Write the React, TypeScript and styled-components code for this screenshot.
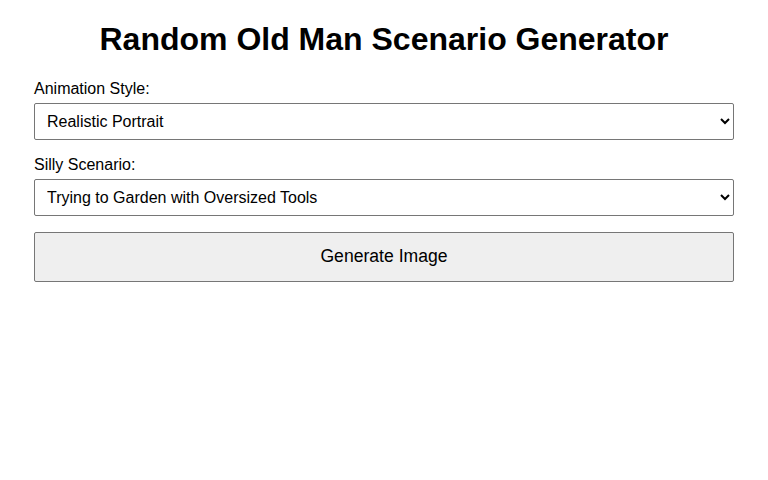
import React, { useState } from 'react';
import styled, { createGlobalStyle } from 'styled-components';

const GlobalStyle = createGlobalStyle`
  body {
    margin: 0;
    background: #fff;
    font-family: "Liberation Sans", Arial, sans-serif;
    color: #000;
  }
`;

const Page = styled.main`
  max-width: 700px;
  margin: 0 auto;
  padding: 21px 0;
`;

const Title = styled.h1`
  font-size: 32px;
  font-weight: bold;
  text-align: center;
  margin: 0 0 22px;
  line-height: 1.15;
`;

const Field = styled.div`
  display: flex;
  flex-direction: column;
  gap: 5px;
  margin-bottom: 16px;
`;

const Label = styled.label`
  font-size: 16px;
  line-height: 18px;
`;

const Select = styled.select`
  width: 100%;
  height: 37px;
  padding: 0 8px;
  font-size: 16px;
  font-family: "Liberation Sans", Arial, sans-serif;
  border: 1px solid #767676;
  border-radius: 2px;
  background: #fff;
  color: #000;
`;

const Button = styled.button`
  width: 100%;
  height: 50px;
  font-size: 17.6px;
  font-family: "Liberation Sans", Arial, sans-serif;
  background: #efefef;
  border: 1px solid #767676;
  border-radius: 2px;
  color: #000;
  cursor: pointer;
`;

const styles = ['Realistic Portrait', 'Cartoon', 'Anime', 'Claymation', 'Watercolor'];
const scenarios = [
  'Trying to Garden with Oversized Tools',
  'Feeding Pigeons in the Park',
  'Learning to Use a Smartphone',
  'Dancing at a Wedding',
];

export default function App() {
  const [style, setStyle] = useState(styles[0]);
  const [scenario, setScenario] = useState(scenarios[0]);

  return (
    <>
      <GlobalStyle />
      <Page>
        <Title>Random Old Man Scenario Generator</Title>
        <Field>
          <Label htmlFor="style">Animation Style:</Label>
          <Select id="style" value={style} onChange={(e) => setStyle(e.target.value)}>
            {styles.map((s) => (
              <option key={s}>{s}</option>
            ))}
          </Select>
        </Field>
        <Field>
          <Label htmlFor="scenario">Silly Scenario:</Label>
          <Select id="scenario" value={scenario} onChange={(e) => setScenario(e.target.value)}>
            {scenarios.map((s) => (
              <option key={s}>{s}</option>
            ))}
          </Select>
        </Field>
        <Button>Generate Image</Button>
      </Page>
    </>
  );
}
